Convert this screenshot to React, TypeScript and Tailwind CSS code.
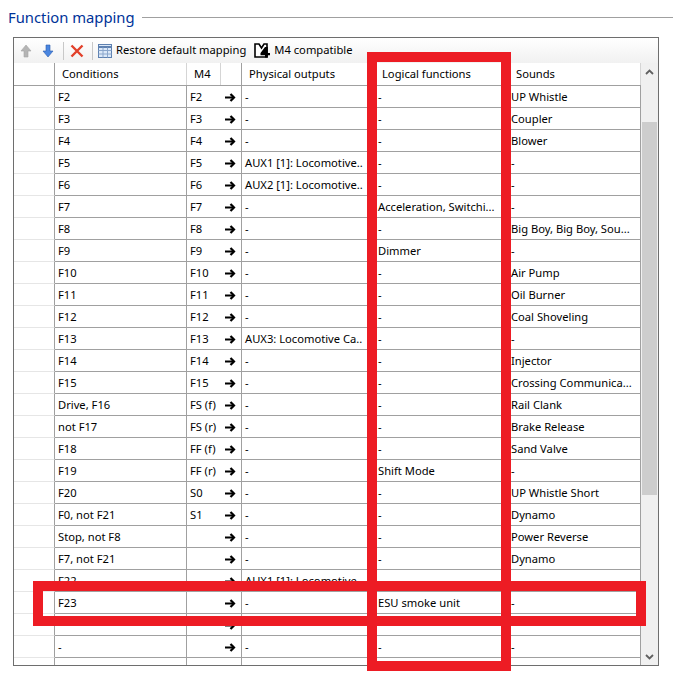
import React from 'react'

type Row = [string, string, string, string, string]

const rows: Row[] = [
  ['F2', 'F2', '-', '-', 'UP Whistle'],
  ['F3', 'F3', '-', '-', 'Coupler'],
  ['F4', 'F4', '-', '-', 'Blower'],
  ['F5', 'F5', 'AUX1 [1]: Locomotive..', '-', '-'],
  ['F6', 'F6', 'AUX2 [1]: Locomotive..', '-', '-'],
  ['F7', 'F7', '-', 'Acceleration, Switchi...', '-'],
  ['F8', 'F8', '-', '-', 'Big Boy, Big Boy, Sou...'],
  ['F9', 'F9', '-', 'Dimmer', '-'],
  ['F10', 'F10', '-', '-', 'Air Pump'],
  ['F11', 'F11', '-', '-', 'Oil Burner'],
  ['F12', 'F12', '-', '-', 'Coal Shoveling'],
  ['F13', 'F13', 'AUX3: Locomotive Ca..', '-', '-'],
  ['F14', 'F14', '-', '-', 'Injector'],
  ['F15', 'F15', '-', '-', 'Crossing Communica...'],
  ['Drive, F16', 'FS (f)', '-', '-', 'Rail Clank'],
  ['not F17', 'FS (r)', '-', '-', 'Brake Release'],
  ['F18', 'FF (f)', '-', '-', 'Sand Valve'],
  ['F19', 'FF (r)', '-', 'Shift Mode', '-'],
  ['F20', 'S0', '-', '-', 'UP Whistle Short'],
  ['F0, not F21', 'S1', '-', '-', 'Dynamo'],
  ['Stop, not F8', '', '-', '-', 'Power Reverse'],
  ['F7, not F21', '', '-', '-', 'Dynamo'],
  ['F22', '', 'AUX1 [1]: Locomotive..', '-', '-'],
  ['F23', '', '-', 'ESU smoke unit', '-'],
  ['', '', '', '', ''],
  ['-', '', '-', '-', '-'],
  ['', '', '', '', ''],
]

const Arrow = () => (
  <svg width="11" height="9" viewBox="0 0 11 9" className="shrink-0">
    <path d="M0 4.5H8.5" stroke="#000" strokeWidth="2" />
    <path d="M5.5 1L9 4.5L5.5 8" fill="none" stroke="#000" strokeWidth="2.2" />
  </svg>
)

const Separator = () => <div className="w-px h-[18px] bg-[#c8c8c8]" />

const Toolbar = () => (
  <div className="h-[25px] flex items-center pl-[6px] bg-gradient-to-b from-white to-[#f1f1f1]">
    <svg width="12" height="14" viewBox="0 0 12 14">
      <path d="M6 1L11 7H8V13H4V7H1Z" fill="#b4b4b4" stroke="#a4a4a4" strokeWidth="0.6" />
    </svg>
    <svg width="12" height="14" viewBox="0 0 12 14" className="ml-[10px]">
      <path d="M6 13L11 7H8V1H4V7H1Z" fill="#4a86e0" stroke="#2a5cb0" strokeWidth="0.6" />
    </svg>
    <div className="ml-[9px]"><Separator /></div>
    <svg width="14" height="14" viewBox="0 0 14 14" className="ml-[6px]">
      <path d="M1.5 1.5L12.5 12.5M12.5 1.5L1.5 12.5" stroke="#e2402a" strokeWidth="2.4" />
    </svg>
    <div className="ml-[8px]"><Separator /></div>
    <svg width="14" height="14" viewBox="0 0 14 14" className="ml-[5px]">
      <rect x="0.5" y="0.5" width="13" height="13" fill="#dbe8f8" stroke="#5d80b0" />
      <path d="M0.5 3H13.5" stroke="#5d80b0" strokeWidth="2" />
      <path d="M0.5 6.5H13.5M0.5 10H13.5M5 3.5V13.5M9.5 3.5V13.5" stroke="#8aa6cc" />
    </svg>
    <span className="ml-[4px]">Restore default mapping</span>
    <svg width="17" height="15" viewBox="0 0 17 15" className="ml-[8px]">
      <path d="M1 1H5L7.5 5L10 1H13V14H1Z" fill="#fff" stroke="#000" strokeWidth="1.6" />
      <path d="M11 4L6.5 10V12.2H11V14.5H13.8V12.2H16V10H13.8V4Z" fill="#000" />
    </svg>
    <span className="ml-[3px]">M4 compatible</span>
  </div>
)

const HeaderCell = ({ label, className }: { label?: string; className: string }) => (
  <div className={`h-full pl-[7px] flex items-center border-r border-[#d5d5d5] ${className}`}>{label}</div>
)

const cell = 'h-full flex items-center pl-[3px] pt-px border-r border-[#a0a0a0] whitespace-nowrap overflow-hidden'

const TableRow = ({ row }: { row: Row }) => (
  <div className="h-[22px] flex shrink-0">
    <div className="w-[41px] h-full border-r border-b border-r-[#a0a0a0] border-b-[#e6e6e6]" />
    <div className="h-full flex border-b border-[#a0a0a0]">
      <div className={`${cell} w-[132px]`}>{row[0]}</div>
      <div className={`${cell} w-[55px] justify-between pr-[5px]`}>
        <span>{row[1]}</span>
        <Arrow />
      </div>
      <div className={`${cell} w-[133px]`}>{row[2]}</div>
      <div className={`${cell} w-[134px]`}>{row[3]}</div>
      <div className={`${cell} w-[132px] !pl-[2px]`}>{row[4]}</div>
    </div>
  </div>
)

const Scrollbar = () => (
  <div className="w-[17px] h-full bg-[#f0f0f0] flex flex-col items-center">
    <svg width="9" height="6" viewBox="0 0 9 6" className="mt-[6px] shrink-0">
      <path d="M1 5L4.5 1.5L8 5" fill="none" stroke="#606060" strokeWidth="1.8" />
    </svg>
    <div className="w-[15px] h-[373px] mt-[47px] bg-[#cdcdcd]" />
    <div className="flex-1" />
    <svg width="9" height="6" viewBox="0 0 9 6" className="mb-[5px] shrink-0">
      <path d="M1 1L4.5 4.5L8 1" fill="none" stroke="#606060" strokeWidth="1.8" />
    </svg>
  </div>
)

export default function App() {
  return (
    <div className="relative w-[673px] h-[681px] overflow-hidden bg-white text-[11.2px] text-black font-['Noto_Sans',sans-serif]">
      <div className="h-[37px] flex items-center pl-[8px] pb-[3px]">
        <span className="text-[14.8px] text-[#003399]">Function mapping</span>
        <div className="flex-1 h-px bg-[#a0a0a0] ml-[7px]" />
      </div>

      <div className="ml-[13px] w-[646px] h-[629px] border border-[#6e6e6e] flex flex-col">
        <Toolbar />
        <div className="flex-1 min-h-0 flex">
          <div className="flex-1 min-w-0 flex flex-col overflow-hidden">
            <div className="h-[23px] flex shrink-0 border-b border-[#a0a0a0]">
              <div className="w-[41px] h-full border-r border-[#a0a0a0]" />
              <HeaderCell label="Conditions" className="w-[132px]" />
              <HeaderCell label="M4" className="w-[34px]" />
              <div className="w-[21px] h-full border-r border-[#a0a0a0]" />
              <HeaderCell label="Physical outputs" className="w-[133px]" />
              <HeaderCell label="Logical functions" className="w-[134px]" />
              <HeaderCell label="Sounds" className="w-[132px]" />
            </div>
            {rows.map((row, i) => (
              <TableRow key={i} row={row} />
            ))}
          </div>
          <Scrollbar />
        </div>
      </div>

      <div className="absolute left-[367px] top-[52px] w-[144px] h-[619px] border-[10px] border-[#ed1c24]" />
      <div className="absolute left-[33px] top-[581px] w-[613px] h-[45px] border-[10px] border-[#ed1c24]" />
    </div>
  )
}
